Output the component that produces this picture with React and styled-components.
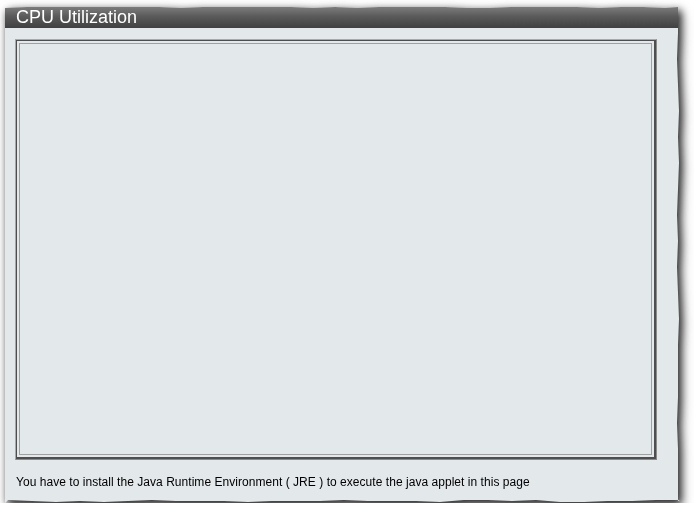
import React from 'react'
import styled, { createGlobalStyle } from 'styled-components'

const GlobalStyle = createGlobalStyle`
    html, body {
        margin: 0;
        padding: 0;
        background: #ffffff;
    }
    body {
        font-family: "Liberation Sans", Arial, sans-serif;
    }
`

// slightly ragged paper edge, fixed points so the picture is stable
const W = 675
const H = 496
const wave = (i, seed) => Math.round((Math.sin(i * 0.9 + seed) + Math.sin(i * 2.3 + seed * 2)) * 0.7)
const tornEdge = (() => {
    const pts = []
    for (let x = 0; x <= W; x += 22) pts.push(`${x}px ${Math.max(0, wave(x / 22, 1))}px`)
    for (let y = 0; y <= H; y += 26) pts.push(`${W - 2 + wave(y / 26, 3)}px ${y}px`)
    for (let x = W; x >= 0; x -= 24) pts.push(`${x}px ${H - 2 + wave(x / 24, 5)}px`)
    pts.push(`0px ${H}px`)
    return `polygon(${pts.join(', ')})`
})()

const Page = styled.div`
    padding: 7px 0 0 5px;
`

const Shadow = styled.div`
    width: ${W}px;
    filter: drop-shadow(3px 4px 4px rgba(0, 0, 0, 0.8)) drop-shadow(2px 2px 5px rgba(0, 0, 0, 0.3));
`

const Panel = styled.section`
    width: ${W}px;
    height: ${H}px;
    background: #e3e8ea;
    clip-path: ${tornEdge};
    display: flex;
    flex-direction: column;
`

const Header = styled.h1`
    margin: 0;
    height: 21px;
    padding-left: 11px;
    background: linear-gradient(#7c7c7c 0%, #5a5a5a 45%, #414141 100%);
    color: #ffffff;
    font-size: 18px;
    font-weight: normal;
    line-height: 20px;
`

const Content = styled.div`
    padding: 11px 0 0 10px;
`

const AppletFrame = styled.div`
    width: 642px;
    height: 421px;
    box-sizing: border-box;
    border: 1px solid #a9a9a9;
    border-right-color: #8a8a8a;
    border-bottom-color: #8a8a8a;
    background: #e3e8ea;
`

const FrameInner = styled.div`
    height: 100%;
    box-sizing: border-box;
    border: 2px solid #4e4e4e;
    border-top-width: 1px;
    border-left-width: 1px;
    padding: 2px;
`

const FrameLine = styled.div`
    height: 100%;
    box-sizing: border-box;
    border: 1px solid #a0a0a0;
`

const Notice = styled.p`
    margin: 15px 0 0 1px;
    font-size: 12px;
    letter-spacing: 0.04px;
    line-height: 14px;
    color: #000000;
`

export default function App() {
    return (
        <Page>
            <GlobalStyle />
            <Shadow>
                <Panel>
                    <Header>CPU Utilization</Header>
                    <Content>
                        <AppletFrame>
                            <FrameInner>
                                <FrameLine />
                            </FrameInner>
                        </AppletFrame>
                        <Notice>You have to install the Java Runtime Environment ( JRE ) to execute the java applet in this page</Notice>
                    </Content>
                </Panel>
            </Shadow>
        </Page>
    )
}
